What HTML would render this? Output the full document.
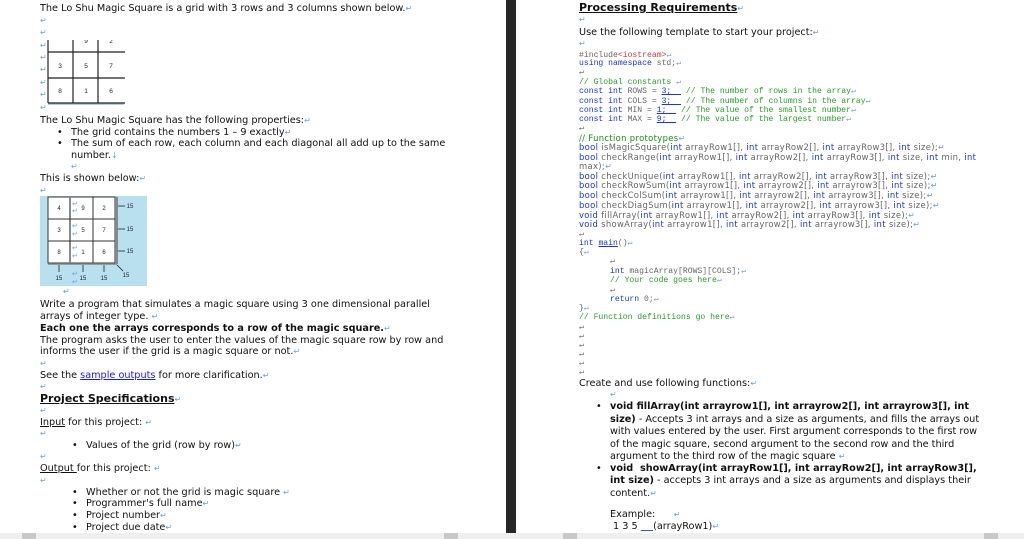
<!DOCTYPE html>
<html><head><meta charset="utf-8"><style>
*{margin:0;padding:0;box-sizing:border-box}
body{width:1024px;height:539px;background:#fff;position:relative;overflow:hidden;font-family:"DejaVu Sans","Liberation Sans",sans-serif;font-size:9.7px;color:#111}
.t{position:absolute;white-space:nowrap;line-height:12px}
.r{color:#6aa0e0;font-size:8px}
.c{position:absolute;white-space:nowrap;font-family:"Liberation Mono",monospace;font-size:8.1px;line-height:9px;color:#666}
.p{font-family:"DejaVu Sans",sans-serif;font-size:8.4px;letter-spacing:0.35px}
.k{color:#1a35d8}.g{color:#2a9a2a}.m{color:#c04040}
b{font-weight:bold}
</style></head><body>
<div style="position:absolute;left:506px;top:0;width:10px;height:539px;background:#262626"></div>
<div style="position:absolute;left:0;top:533px;width:1024px;height:6px;background:#efefef"></div>
<div style="position:absolute;left:22px;top:533px;width:14px;height:6px;background:#c8c8c8"></div>
<div style="position:absolute;left:444px;top:533px;width:14px;height:6px;background:#c8c8c8"></div>
<div style="position:absolute;left:563px;top:533px;width:14px;height:6px;background:#c8c8c8"></div>
<div style="position:absolute;left:984px;top:533px;width:14px;height:6px;background:#c8c8c8"></div>

<!-- LEFT PAGE -->
<div class="t" style="left:40px;top:3px">The Lo Shu Magic Square is a grid with 3 rows and 3 columns shown below.<span class="r">↵</span></div>
<div class="t r" style="left:40px;top:15px">↵</div>
<div class="t r" style="left:40px;top:27px">↵</div>
<div class="t r" style="left:40px;top:40px">↵</div>
<div class="t r" style="left:40px;top:52px">↵</div>
<div class="t r" style="left:40px;top:64px">↵</div>
<div class="t r" style="left:40px;top:77px">↵</div>
<div class="t r" style="left:40px;top:89px">↵</div>
<div class="t r" style="left:40px;top:102px">↵</div>
<div style="position:absolute;left:48px;top:40px;width:76px;height:65px;border-bottom:2px solid #a8d4e6"></div>
<svg style="position:absolute;left:47px;top:40px" width="78" height="65">
<g stroke="#222" stroke-width="1.2" fill="none">
<line x1="1" y1="0" x2="1" y2="63"/><line x1="26" y1="0" x2="26" y2="63"/><line x1="51" y1="0" x2="51" y2="63"/>
<line x1="1" y1="12" x2="78" y2="12"/><line x1="1" y1="38" x2="78" y2="38"/><line x1="1" y1="63" x2="78" y2="63"/></g>
<g font-family="Liberation Sans" font-size="6.5" fill="#222" text-anchor="middle">
<text x="13" y="28">3</text><text x="39" y="28">5</text><text x="64" y="28">7</text>
<text x="13" y="53">8</text><text x="39" y="53">1</text><text x="64" y="53">6</text>
<text x="39" y="3">9</text><text x="64" y="3">2</text></g></svg>

<div class="t" style="left:40px;top:115px">The Lo Shu Magic Square has the following properties:<span class="r">↵</span></div>
<div class="t" style="left:57px;top:127px">•</div><div class="t" style="left:71px;top:127px">The grid contains the numbers 1 – 9 exactly<span class="r">↵</span></div>
<div class="t" style="left:57px;top:138px">•</div><div class="t" style="left:71px;top:138px">The sum of each row, each column and each diagonal all add up to the same</div>
<div class="t" style="left:71px;top:150px">number.<span class="r">↓</span></div>
<div class="t r" style="left:71px;top:161px">↵</div>
<div class="t" style="left:40px;top:173px">This is shown below:<span class="r">↵</span></div>
<div class="t r" style="left:40px;top:185px">↵</div>
<div style="position:absolute;left:40px;top:196px;width:107px;height:90px;background:#b8e0ee"></div>
<svg style="position:absolute;left:40px;top:196px" width="107" height="90">
<rect x="8" y="1" width="67" height="66" fill="#fff" stroke="#333" stroke-width="1"/>
<g stroke="#333" stroke-width="1"><line x1="30" y1="1" x2="30" y2="67" stroke="#888" stroke-width="2"/><line x1="53" y1="1" x2="53" y2="67"/>
<line x1="8" y1="23" x2="75" y2="23"/><line x1="8" y1="45" x2="75" y2="45"/>
<line x1="77" y1="1" x2="77" y2="68" stroke="#888" stroke-width="2"/><line x1="8" y1="68" x2="77" y2="68" stroke="#888" stroke-width="1.5"/></g>
<g font-family="Liberation Sans" font-size="6" fill="#222" text-anchor="middle">
<text x="19" y="14">4</text><text x="43" y="14">9</text><text x="64" y="14">2</text>
<text x="19" y="36">3</text><text x="43" y="36">5</text><text x="64" y="36">7</text>
<text x="19" y="58">8</text><text x="43" y="58">1</text><text x="64" y="58">6</text>
<text x="90" y="12">15</text><text x="90" y="35">15</text><text x="90" y="57">15</text>
<text x="19" y="84">15</text><text x="43" y="84">15</text><text x="64" y="84">15</text><text x="86" y="81">15</text></g>
<g stroke="#222" stroke-width="0.8"><line x1="78" y1="10" x2="85" y2="10"/><line x1="78" y1="33" x2="85" y2="33"/><line x1="78" y1="55" x2="85" y2="55"/>
<line x1="19" y1="69" x2="19" y2="76"/><line x1="43" y1="69" x2="43" y2="76"/><line x1="64" y1="69" x2="64" y2="76"/><line x1="77" y1="69" x2="83" y2="75"/></g>
<g fill="#6aa0e0" font-size="7" font-family="DejaVu Sans"><text x="32" y="10">↵</text><text x="32" y="17">↵</text><text x="32" y="32">↵</text><text x="32" y="40">↵</text><text x="32" y="54">↵</text><text x="32" y="62">↵</text><text x="32" y="80">↵</text><text x="32" y="88">↵</text></g>
</svg>
<div class="t r" style="left:63px;top:286px">↵</div>
<div class="t" style="left:40px;top:299px">Write a program that simulates a magic square using 3 one dimensional parallel</div>
<div class="t" style="left:40px;top:311px">arrays of integer type. <span class="r">↵</span></div>
<div class="t" style="left:40px;top:323px"><b>Each one the arrays corresponds to a row of the magic square.</b><span class="r">↵</span></div>
<div class="t" style="left:40px;top:335px">The program asks the user to enter the values of the magic square row by row and</div>
<div class="t" style="left:40px;top:346px">informs the user if the grid is a magic square or not.<span class="r">↵</span></div>
<div class="t r" style="left:40px;top:358px">↵</div>
<div class="t" style="left:40px;top:370px">See the <span style="color:#1a1aee;text-decoration:underline">sample outputs</span> for more clarification.<span class="r">↵</span></div>
<div class="t r" style="left:40px;top:381px">↵</div>
<div class="t" style="left:40px;top:393px;font-size:11px"><b style="text-decoration:underline">Project Specifications</b><span class="r">↵</span></div>
<div class="t r" style="left:40px;top:405px">↵</div>
<div class="t" style="left:40px;top:417px"><u>Input</u> for this project: <span class="r">↵</span></div>
<div class="t r" style="left:40px;top:428px">↵</div>
<div class="t" style="left:72px;top:440px">•</div><div class="t" style="left:86px;top:440px">Values of the grid (row by row)<span class="r">↵</span></div>
<div class="t r" style="left:40px;top:451px">↵</div>
<div class="t" style="left:40px;top:463px"><u>Output </u>for this project: <span class="r">↵</span></div>
<div class="t r" style="left:40px;top:475px">↵</div>
<div class="t" style="left:72px;top:487px">•</div><div class="t" style="left:86px;top:487px">Whether or not the grid is magic square <span class="r">↵</span></div>
<div class="t" style="left:72px;top:498px">•</div><div class="t" style="left:86px;top:498px">Programmer's full name<span class="r">↵</span></div>
<div class="t" style="left:72px;top:510px">•</div><div class="t" style="left:86px;top:510px">Project number<span class="r">↵</span></div>
<div class="t" style="left:72px;top:522px">•</div><div class="t" style="left:86px;top:522px">Project due date<span class="r">↵</span></div>

<!-- RIGHT PAGE -->
<div class="t" style="left:579px;top:2px;font-size:11px"><b style="text-decoration:underline">Processing Requirements</b><span class="r">↵</span></div>
<div class="t r" style="left:579px;top:14px">↵</div>
<div class="t" style="left:579px;top:27px">Use the following template to start your project:<span class="r">↵</span></div>
<div class="t r" style="left:579px;top:38px">↵</div>
<div class="c" style="left:579px;top:51px">#include<span class="m">&lt;iostream&gt;</span><span class="r">↵</span></div>
<div class="c" style="left:579px;top:59px"><span class="k">using namespace</span> std;<span class="r">↵</span></div>
<div class="c r" style="left:579px;top:68px">↵</div>
<div class="c g" style="left:579px;top:78px">// Global constants <span class="r">↵</span></div>
<div class="c" style="left:579px;top:87px"><span class="k">const int</span> ROWS = <u class="k">3;&nbsp;&nbsp;</u> <span class="g">// The number of rows in the array</span><span class="r">↵</span></div>
<div class="c" style="left:579px;top:97px"><span class="k">const int</span> COLS = <u class="k">3;&nbsp;&nbsp;</u> <span class="g">// The number of columns in the array</span><span class="r">↵</span></div>
<div class="c" style="left:579px;top:106px"><span class="k">const int</span> MIN = <u class="k">1;&nbsp;&nbsp;</u> <span class="g">// The value of the smallest number</span><span class="r">↵</span></div>
<div class="c" style="left:579px;top:115px"><span class="k">const int</span> MAX = <u class="k">9;&nbsp;&nbsp;</u> <span class="g">// The value of the largest number</span><span class="r">↵</span></div>
<div class="c r" style="left:579px;top:124px">↵</div>
<div class="c p" style="left:579px;top:134px;color:#1a8a1a">// Function prototypes<span class="r">↵</span></div>
<div class="c p" style="left:579px;top:143px"><span class="k">bool</span> isMagicSquare(<span class="k">int</span> arrayRow1[], <span class="k">int</span> arrayRow2[], <span class="k">int</span> arrayRow3[], <span class="k">int</span> size);<span class="r">↵</span></div>
<div class="c p" style="left:579px;top:153px"><span class="k">bool</span> checkRange(<span class="k">int</span> arrayRow1[], <span class="k">int</span> arrayRow2[], <span class="k">int</span> arrayRow3[], <span class="k">int</span> size, <span class="k">int</span> min, <span class="k">int</span></div>
<div class="c p" style="left:579px;top:162px">max);<span class="r">↵</span></div>
<div class="c p" style="left:579px;top:172px"><span class="k">bool</span> checkUnique(<span class="k">int</span> arrayRow1[], <span class="k">int</span> arrayRow2[], <span class="k">int</span> arrayRow3[], <span class="k">int</span> size);<span class="r">↵</span></div>
<div class="c p" style="left:579px;top:181px"><span class="k">bool</span> checkRowSum(<span class="k">int</span> arrayrow1[], <span class="k">int</span> arrayrow2[], <span class="k">int</span> arrayrow3[], <span class="k">int</span> size);<span class="r">↵</span></div>
<div class="c p" style="left:579px;top:191px"><span class="k">bool</span> checkColSum(<span class="k">int</span> arrayrow1[], <span class="k">int</span> arrayrow2[], <span class="k">int</span> arrayrow3[], <span class="k">int</span> size);<span class="r">↵</span></div>
<div class="c p" style="left:579px;top:201px"><span class="k">bool</span> checkDiagSum(<span class="k">int</span> arrayrow1[], <span class="k">int</span> arrayrow2[], <span class="k">int</span> arrayrow3[], <span class="k">int</span> size);<span class="r">↵</span></div>
<div class="c p" style="left:579px;top:211px"><span class="k">void</span> fillArray(<span class="k">int</span> arrayRow1[], <span class="k">int</span> arrayRow2[], <span class="k">int</span> arrayRow3[], <span class="k">int</span> size);<span class="r">↵</span></div>
<div class="c p" style="left:579px;top:220px"><span class="k">void</span> showArray(<span class="k">int</span> arrayrow1[], <span class="k">int</span> arrayrow2[], <span class="k">int</span> arrayrow3[], <span class="k">int</span> size);<span class="r">↵</span></div>
<div class="c r" style="left:579px;top:230px">↵</div>
<div class="c" style="left:579px;top:239px"><span class="k">int</span> <u class="k">main</u>()<span class="r">↵</span></div>
<div class="c" style="left:579px;top:248px">{<span class="r">↵</span></div>
<div class="c r" style="left:610px;top:257px">↵</div>
<div class="c" style="left:610px;top:267px"><span class="k">int</span> magicArray[ROWS][COLS];<span class="r">↵</span></div>
<div class="c g" style="left:610px;top:276px">// Your code goes here<span class="r">↵</span></div>
<div class="c r" style="left:610px;top:286px">↵</div>
<div class="c" style="left:610px;top:295px"><span class="k">return</span> 0;<span class="r">↵</span></div>
<div class="c" style="left:579px;top:304px">}<span class="r">↵</span></div>
<div class="c g" style="left:579px;top:313px">// Function definitions go here<span class="r">↵</span></div>
<div class="c r" style="left:579px;top:323px">↵</div>
<div class="c r" style="left:579px;top:332px">↵</div>
<div class="c r" style="left:579px;top:341px">↵</div>
<div class="c r" style="left:579px;top:350px">↵</div>
<div class="c r" style="left:579px;top:359px">↵</div>
<div class="c r" style="left:579px;top:368px">↵</div>
<div class="t" style="left:579px;top:378px">Create and use following functions:<span class="r">↵</span></div>
<div class="t r" style="left:610px;top:389px">↵</div>
<div class="t" style="left:596px;top:401px">•</div>
<div class="t" style="left:610px;top:401px"><b>void fillArray(int arrayrow1[], int arrayrow2[], int arrayrow3[], int</b></div>
<div class="t" style="left:610px;top:414px"><b>size)</b> - Accepts 3 int arrays and a size as arguments, and fills the arrays out</div>
<div class="t" style="left:610px;top:426px">with values entered by the user. First argument corresponds to the first row</div>
<div class="t" style="left:610px;top:439px">of the magic square, second argument to the second row and the third</div>
<div class="t" style="left:610px;top:451px">argument to the third row of the magic square <span class="r">↵</span></div>
<div class="t" style="left:596px;top:463px">•</div>
<div class="t" style="left:610px;top:463px"><b>void&nbsp; showArray(int arrayRow1[], int arrayRow2[], int arrayRow3[],</b></div>
<div class="t" style="left:610px;top:475px"><b>int size)</b> - accepts 3 int arrays and a size as arguments and displays their</div>
<div class="t" style="left:610px;top:488px">content.<span class="r">↵</span></div>
<div class="t" style="left:610px;top:509px">Example:&nbsp;&nbsp;&nbsp;&nbsp;&nbsp; <span class="r">↵</span></div>
<div class="t" style="left:613px;top:521px">1 3 5 <u style="color:#3060d0">&nbsp;&nbsp;&nbsp;&nbsp;</u>(arrayRow1)<span class="r">↵</span></div>
</body></html>
